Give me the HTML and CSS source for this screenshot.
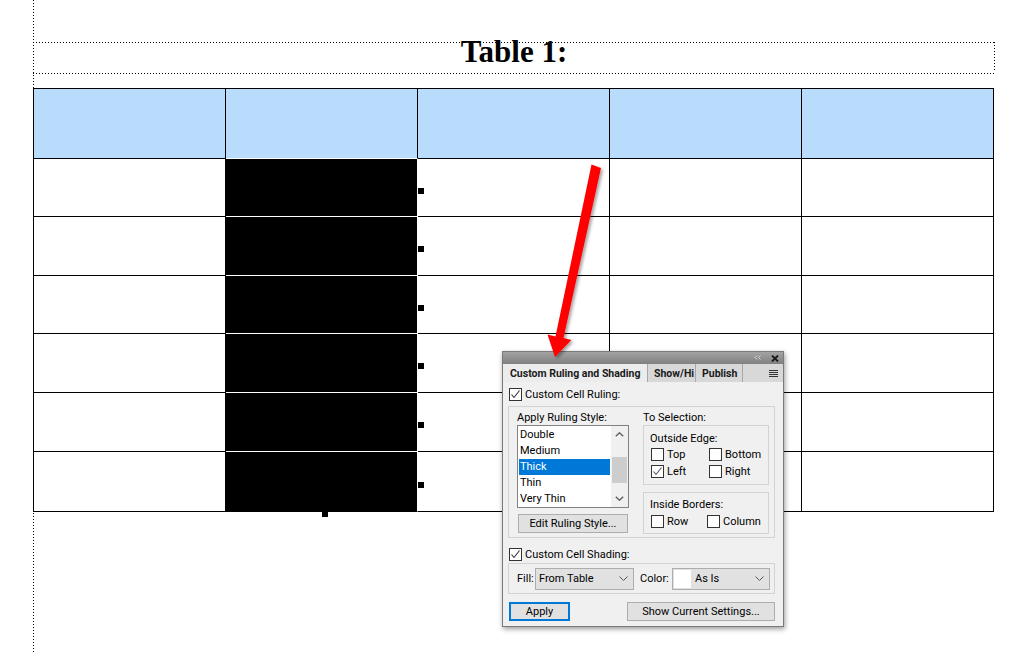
FILE: index.html
```html
<!DOCTYPE html>
<html lang="en">
<head>
    <meta charset="UTF-8">
    <title>Table 1</title>
    <link rel="stylesheet" href="styles.css">
</head>
<body>
    <div class="page">
        <div class="title-frame"><h1 class="title">Table 1:</h1></div>
        <div class="grid">
            <div class="cell head"></div>
            <div class="cell head head-sel"></div>
            <div class="cell head"></div>
            <div class="cell head"></div>
            <div class="cell head"></div>

            <div class="cell"></div>
            <div class="cell sel"></div>
            <div class="cell mark"><span class="handle"></span></div>
            <div class="cell"></div>
            <div class="cell"></div>

            <div class="cell"></div>
            <div class="cell sel"></div>
            <div class="cell mark"><span class="handle"></span></div>
            <div class="cell"></div>
            <div class="cell"></div>

            <div class="cell"></div>
            <div class="cell sel"></div>
            <div class="cell mark"><span class="handle"></span></div>
            <div class="cell"></div>
            <div class="cell"></div>

            <div class="cell"></div>
            <div class="cell sel"></div>
            <div class="cell mark"><span class="handle"></span></div>
            <div class="cell"></div>
            <div class="cell"></div>

            <div class="cell"></div>
            <div class="cell sel"></div>
            <div class="cell mark"><span class="handle"></span></div>
            <div class="cell"></div>
            <div class="cell"></div>

            <div class="cell"></div>
            <div class="cell sel sel-last"></div>
            <div class="cell mark"><span class="handle"></span></div>
            <div class="cell"></div>
            <div class="cell"></div>

            <span class="handle handle-bottom"></span>
        </div>
    </div>

    <div class="panel">
        <div class="panel-titlebar">
            <svg class="collapse-icon" width="7" height="5" viewBox="0 0 7 5"><path d="M3 0.5 L1 2.5 L3 4.5 M6.5 0.5 L4.5 2.5 L6.5 4.5" fill="none" stroke="#d8d8d8" stroke-width="1"/></svg>
            <svg class="close-icon" width="8" height="7" viewBox="0 0 8 7"><path d="M1 0.5 L7 6.5 M7 0.5 L1 6.5" fill="none" stroke="#1a1a1a" stroke-width="1.8"/></svg>
        </div>
        <div class="tabs">
            <div class="tab tab-active">Custom Ruling and Shading</div>
            <div class="tab tab-show">Show/Hi</div>
            <div class="tab tab-publish">Publish</div>
            <div class="tab-menu">
                <svg width="9" height="7" viewBox="0 0 9 7"><path d="M0 0.5 H9 M0 2.5 H9 M0 4.5 H9 M0 6.5 H9" stroke="#333" stroke-width="1"/></svg>
            </div>
        </div>
        <div class="panel-body">
            <div class="check check-top">
                <span class="box"><svg width="11" height="11" viewBox="0 0 11 11"><path d="M1.5 5.5 L4 8.5 L9.5 1.5" fill="none" stroke="#333" stroke-width="1.1"/></svg></span>
                Custom Cell Ruling:
            </div>
            <div class="group ruling">
                <div class="col-left">
                    <div class="label">Apply Ruling Style:</div>
                    <div class="listbox">
                        <ul class="items">
                            <li>Double</li>
                            <li>Medium</li>
                            <li class="selected">Thick</li>
                            <li>Thin</li>
                            <li>Very Thin</li>
                        </ul>
                        <div class="scrollbar">
                            <div class="scroll-btn"><svg width="9" height="5" viewBox="0 0 9 5"><path d="M0.8 4.3 L4.5 0.8 L8.2 4.3" fill="none" stroke="#606060" stroke-width="1.4"/></svg></div>
                            <div class="thumb"></div>
                            <div class="track"></div>
                            <div class="scroll-btn"><svg width="9" height="5" viewBox="0 0 9 5"><path d="M0.8 0.7 L4.5 4.2 L8.2 0.7" fill="none" stroke="#606060" stroke-width="1.4"/></svg></div>
                        </div>
                    </div>
                    <button class="btn btn-edit">Edit Ruling Style...</button>
                </div>
                <div class="col-right">
                    <div class="label">To Selection:</div>
                    <div class="group sub outside">
                        <div class="label">Outside Edge:</div>
                        <div class="check-grid">
                            <div class="check"><span class="box"></span>Top</div>
                            <div class="check"><span class="box"></span>Bottom</div>
                            <div class="check">
                                <span class="box"><svg width="11" height="11" viewBox="0 0 11 11"><path d="M1.5 5.5 L4 8.5 L9.5 1.5" fill="none" stroke="#555" stroke-width="1.1"/></svg></span>
                                Left
                            </div>
                            <div class="check"><span class="box"></span>Right</div>
                        </div>
                    </div>
                    <div class="group sub inside">
                        <div class="label">Inside Borders:</div>
                        <div class="check-grid check-grid-inside">
                            <div class="check"><span class="box"></span>Row</div>
                            <div class="check"><span class="box"></span>Column</div>
                        </div>
                    </div>
                </div>
            </div>
            <div class="check check-shading">
                <span class="box"><svg width="11" height="11" viewBox="0 0 11 11"><path d="M1.5 5.5 L4 8.5 L9.5 1.5" fill="none" stroke="#333" stroke-width="1.1"/></svg></span>
                Custom Cell Shading:
            </div>
            <div class="group shading">
                <span class="field-label field-fill">Fill:</span>
                <div class="select select-fill">
                    <span>From Table</span>
                    <svg width="9" height="5" viewBox="0 0 9 5"><path d="M0.5 0.5 L4.5 4.5 L8.5 0.5" fill="none" stroke="#555" stroke-width="1"/></svg>
                </div>
                <span class="field-label field-color">Color:</span>
                <div class="select select-color">
                    <span class="swatch"></span>
                    <span class="select-text">As Is</span>
                    <svg width="9" height="5" viewBox="0 0 9 5"><path d="M0.5 0.5 L4.5 4.5 L8.5 0.5" fill="none" stroke="#555" stroke-width="1"/></svg>
                </div>
            </div>
            <div class="actions">
                <button class="btn btn-apply">Apply</button>
                <button class="btn btn-show">Show Current Settings...</button>
            </div>
        </div>
    </div>

    <svg class="arrow" width="1018" height="652" viewBox="0 0 1018 652">
        <defs>
            <filter id="arrow-shadow" x="-30%" y="-10%" width="160%" height="120%">
                <feDropShadow dx="2" dy="2" stdDeviation="1.5" flood-color="#000" flood-opacity="0.35"/>
            </filter>
        </defs>
        <polygon points="591.5,164.5 601,168 563.5,338 571.5,340 555,357 547.5,334.5 555.5,336.5" fill="#ff0000" filter="url(#arrow-shadow)"/>
    </svg>
</body>
</html>
```

FILE: styles.css
```css
* {
    box-sizing: border-box;
}

body {
    margin: 0;
    background-color: #fff;
    font-family: "Liberation Serif", serif;
}

/* pagina com a margem pontilhada */
.page {
    position: relative;
    margin-left: 33px;
    width: 962px;
    height: 652px;
    padding-top: 42px;
    background: repeating-linear-gradient(to bottom, #000 0 1px, transparent 1px 3px) left top / 1px 100% no-repeat;
}

.title-frame {
    height: 32px;
    background:
        repeating-linear-gradient(to right, #000 0 1px, transparent 1px 3px) left top / 100% 1px no-repeat,
        repeating-linear-gradient(to right, #000 0 1px, transparent 1px 3px) left bottom / 100% 1px no-repeat,
        repeating-linear-gradient(to bottom, #000 0 1px, transparent 1px 3px) right top / 1px 29px no-repeat;
}
.title {
    margin: 0;
    text-align: center;
    font-size: 31px;
    line-height: 20px;
    font-weight: bold;
    color: #000;
}

/* tabela */
.grid {
    position: relative;
    margin-top: 14px;
    width: 961px;
    display: grid;
    grid-template-columns: repeat(5, 192px);
    grid-template-rows: 70px 58px 59px 58px 59px 59px 60px;
    border-left: 1px solid #000;
    border-top: 1px solid #000;
    background-color: #fff;
}
.cell {
    border-right: 1px solid #000;
    border-bottom: 1px solid #000;
}
.head {
    background-color: #b9dcfd;
}
.head-sel {
    border-bottom-color: #fff;
}
.sel {
    background-color: #000;
    border-right-color: #fff;
    border-bottom-color: #fff;
}
.sel-last {
    border-bottom-color: #000;
}
.mark {
    display: flex;
    align-items: center;
    padding-top: 6px;
}
.handle {
    display: block;
    width: 6px;
    height: 6px;
    background-color: #000;
}
.handle-bottom {
    position: absolute;
    left: 288px;
    top: 422px;
}

/* painel flutuante */
.panel {
    position: absolute;
    left: 502px;
    top: 351px;
    width: 282px;
    height: 276px;
    border: 1px solid #7a7a7a;
    background-color: #f0f0f0;
    box-shadow: 1px 2px 5px rgba(0, 0, 0, 0.4);
    font-family: Roboto, "Liberation Sans", sans-serif;
    font-size: 11px;
    color: #000;
}
.panel-titlebar {
    height: 12px;
    display: flex;
    justify-content: flex-end;
    align-items: center;
    gap: 10px;
    padding-right: 4px;
    background: linear-gradient(#a3a3a3, #808080);
}
.collapse-icon {
    margin-top: -1px;
}

.tabs {
    height: 18px;
    display: flex;
    background-color: #d8d8d8;
    font-size: 10.5px;
    font-weight: bold;
    color: #1a1a1a;
}
.tab {
    display: flex;
    align-items: center;
    border-right: 1px solid #a8a8a8;
    white-space: nowrap;
    overflow: hidden;
}
.tab-active {
    width: 145px;
    padding-left: 7px;
    background-color: #ececec;
}
.tab-show {
    width: 48px;
    padding-left: 6px;
}
.tab-publish {
    width: 47px;
    padding-left: 6px;
}
.tab-menu {
    flex-grow: 1;
    display: flex;
    align-items: center;
    justify-content: flex-end;
    padding-right: 5px;
}

.panel-body {
    padding-left: 5px;
}

.check {
    display: flex;
    align-items: center;
    gap: 3px;
    height: 13px;
    line-height: 13px;
    white-space: nowrap;
}
.box {
    width: 13px;
    height: 13px;
    flex-shrink: 0;
    display: flex;
    align-items: center;
    justify-content: center;
    border: 1px solid #333;
    background-color: #fff;
}
.check-top {
    margin: 6px 0 0 1px;
}
.check-shading {
    margin: 10px 0 0 1px;
}

.group {
    width: 267px;
    border: 1px solid #d3d3d3;
}
.label {
    height: 15px;
    line-height: 15px;
    white-space: nowrap;
}

.ruling {
    margin-top: 5px;
    display: flex;
    padding: 3px 5px 3px 8px;
}
.col-left {
    width: 112px;
}
.col-right {
    width: 126px;
    margin-left: 14px;
}

.listbox {
    height: 83px;
    display: flex;
    border: 1px solid #828282;
    background-color: #fff;
}
.items {
    flex-grow: 1;
    margin: 0;
    padding: 1px 1px 0 1px;
    list-style: none;
}
.items li {
    height: 16px;
    line-height: 16px;
    padding-left: 1px;
}
.items li.selected {
    background-color: #0078d7;
    color: #fff;
}
.scrollbar {
    width: 17px;
    display: flex;
    flex-direction: column;
    background-color: #f0f0f0;
}
.scroll-btn {
    height: 17px;
    display: flex;
    align-items: center;
    justify-content: center;
}
.thumb {
    height: 26px;
    margin: 14px 1px 0 1px;
    background-color: #cdcdcd;
}
.track {
    flex-grow: 1;
}

.btn {
    display: block;
    height: 19px;
    padding: 0;
    border: 1px solid #adadad;
    background-color: #e1e1e1;
    font-family: inherit;
    font-size: inherit;
    color: #000;
    text-align: center;
}
.btn-edit {
    width: 110px;
    margin: 6px 0 0 1px;
}

.sub {
    width: 126px;
    padding-left: 6px;
}
.outside {
    height: 60px;
    padding-top: 5px;
}
.inside {
    height: 42px;
    margin-top: 7px;
    padding-top: 4px;
}
.check-grid {
    display: grid;
    grid-template-columns: 58px 58px;
    row-gap: 4px;
    margin: 2px 0 0 1px;
}
.check-grid-inside {
    grid-template-columns: 56px 60px;
    margin-top: 3px;
}

.shading {
    height: 31px;
    margin-top: 2px;
    display: flex;
    align-items: center;
    padding-left: 8px;
}
.field-label {
    flex-shrink: 0;
    white-space: nowrap;
}
.field-fill {
    width: 18px;
}
.field-color {
    width: 32px;
    margin-left: 6px;
}
.select {
    height: 22px;
    display: flex;
    align-items: center;
    border: 1px solid #adadad;
    background-color: #e1e1e1;
    padding: 0 5px 0 3px;
}
.select svg {
    margin-left: auto;
}
.select-fill {
    width: 99px;
}
.select-color {
    width: 98px;
    padding-left: 1px;
}
.swatch {
    width: 17px;
    height: 18px;
    background-color: #fff;
    margin-right: 4px;
}

.actions {
    width: 267px;
    margin-top: 8px;
    padding-left: 1px;
    display: flex;
    justify-content: space-between;
}
.btn-apply {
    width: 61px;
    border: 2px solid #0078d7;
}
.btn-show {
    width: 148px;
}

.arrow {
    position: absolute;
    left: 0;
    top: 0;
    pointer-events: none;
}
```
